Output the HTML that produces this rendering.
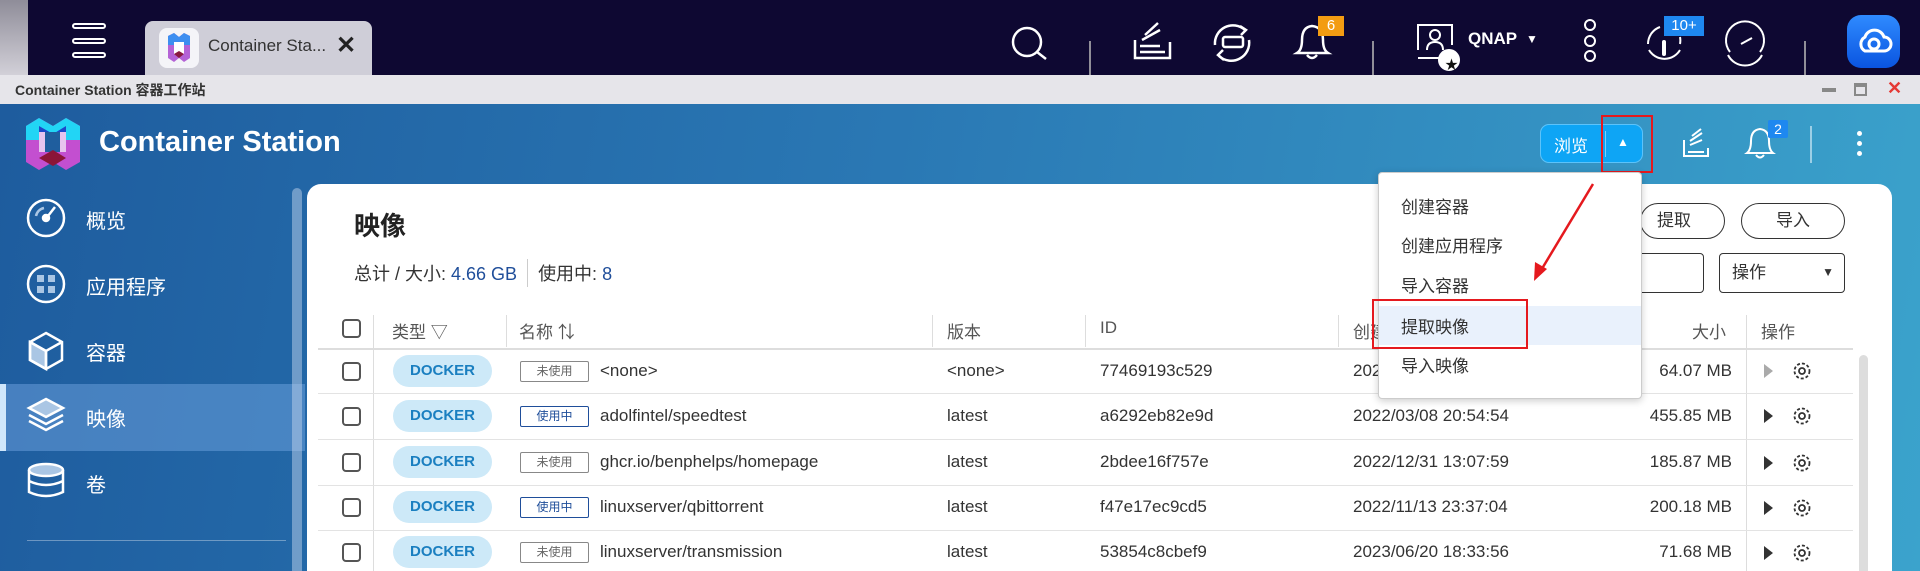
<!DOCTYPE html>
<html><head><meta charset="utf-8"><style>
*{box-sizing:border-box;margin:0;padding:0}
html,body{width:1920px;height:571px;overflow:hidden}
body{position:relative;font-family:"Liberation Sans","Noto Sans CJK SC",sans-serif;background:#fff}
.a{position:absolute}
.top{left:0;top:0;width:1920px;height:75px;background:#0e0832}
.tb{left:0;top:75px;width:1920px;height:29px;background:#e6e5ea}
.main{left:0;top:104px;width:1920px;height:467px;background:linear-gradient(100deg,#1e5c9e 0%,#2a78b4 45%,#3ba3cc 100%)}
.card{left:307px;top:184px;width:1585px;height:387px;background:#fff;border-radius:14px 14px 0 0}
.t{color:#333;font-size:17px;white-space:nowrap}
.side{color:#fff;font-size:20px}
.pill{width:99px;height:32px;border-radius:16px;background:#cde9f8;color:#1a7fc0;font-size:15px;font-weight:bold;text-align:center;line-height:32px}
.tag{width:69px;height:21px;border:1px solid #888;font-size:12px;color:#666;text-align:center;line-height:19px;border-radius:2px}
.tag.u{border-color:#1f4e9a;color:#1f4e9a}
.cb{width:19px;height:19px;border:2px solid #555;border-radius:4px}
.hl{height:1px;background:#e3e3e3}
.vs{width:1px;background:#ddd}
.mi{color:#333;font-size:17px;left:1401px}
</style></head><body>
<div class="a top"></div>
<div class="a" style="left:0;top:0;width:28px;height:75px;background:linear-gradient(#8f8d99,#d2d0d8)"></div>
<div class="a" style="left:72px;top:23px;width:34px;height:6px;border:2px solid #fff;border-radius:4px"></div>
<div class="a" style="left:72px;top:38px;width:34px;height:6px;border:2px solid #fff;border-radius:4px"></div>
<div class="a" style="left:72px;top:52px;width:34px;height:6px;border:2px solid #fff;border-radius:4px"></div>
<div class="a" style="left:145px;top:21px;width:227px;height:54px;background:#cfced8;border-radius:8px 8px 0 0"></div>
<div class="a" style="left:159px;top:28px;width:40px;height:40px;background:#f4f4f8;border-radius:8px"></div>
<svg class="a" style="left:164px;top:33px" width="30" height="30" viewBox="0 0 30 30"><path d="M4 3 L10 0 L15 4 L20 0 L26 3 L26 25 L20 29 L15 25 L10 29 L4 25Z" fill="#b462d6"/><path d="M4 3 L10 0 L15 4 L20 0 L26 3 L26 12 L4 12Z" fill="#3d8ef0"/><rect x="10" y="9" width="10" height="12" fill="#fff"/><path d="M10 21 L15 18 L20 21 L15 25Z" fill="#8a1a40"/></svg>
<div class="a" style="left:208px;top:36px;color:#333;font-size:17px">Container Sta...</div>
<div class="a" style="left:336px;top:31px;color:#222;font-size:24px;font-weight:bold">✕</div>
<svg class="a" style="left:1005px;top:20px" width="400" height="55" viewBox="1005 20 400 55" fill="none" stroke="#fff" stroke-width="2.5">
<circle cx="1027" cy="42" r="14"/><path d="M1037 52 L1046 59"/>
<path d="M1090 41 V75" stroke="#bbb" stroke-width="1.5"/>
<path d="M1135 40 V58 H1170 V42 M1140 52 H1165 M1140 46 H1160 M1142 40 L1160 30 M1145 35 L1158 23"/>
<path d="M1215 45 A18 18 0 0 1 1245 30 M1249 40 A18 18 0 0 1 1219 56"/><path d="M1240 26 L1246 30 L1241 35 M1223 50 L1218 55 L1224 60"/><rect x="1223" y="37" width="20" height="10" rx="2"/>
<path d="M1297 53 Q1302 50 1302 40 Q1302 27 1312 26 Q1323 27 1323 40 Q1323 50 1328 53 Z M1307 55 Q1312 61 1317 55"/>
<path d="M1373 41 V75" stroke="#bbb" stroke-width="1.5"/>
</svg>
<div class="a" style="left:1318px;top:16px;width:26px;height:20px;background:#f39c12;color:#fff;font-size:15px;text-align:center;line-height:20px">6</div>
<svg class="a" style="left:1410px;top:18px" width="510" height="57" viewBox="1410 18 510 57" fill="none" stroke="#fff" stroke-width="2">
<path d="M1418 50 V25 H1452 V45"/><circle cx="1435" cy="35" r="5"/><path d="M1427 50 Q1427 42 1435 42 Q1443 42 1443 50"/><path d="M1418 58 H1440"/>
<circle cx="1449" cy="60" r="10" fill="#fff"/>
<circle cx="1590" cy="25" r="5"/><circle cx="1590" cy="41" r="5"/><circle cx="1590" cy="56" r="5"/>
<path d="M1648 44 A18 18 0 0 1 1660 27 M1680 44 A18 18 0 0 0 1680 37 M1649 50 A18 18 0 0 0 1680 50"/><path d="M1664 42 V54" stroke-width="4" stroke-linecap="round"/>
<path d="M1730 52 A19 19 0 1 1 1760 52 M1728 55 A19 19 0 0 0 1762 55"/><path d="M1741 44 L1752 38"/>
<path d="M1805 41 V75" stroke="#bbb" stroke-width="1.5"/>
</svg>
<div class="a" style="left:1445px;top:54px;color:#111;font-size:13px">★</div>
<div class="a" style="left:1468px;top:29px;color:#fff;font-size:17px;font-weight:bold">QNAP</div>
<div class="a" style="left:1526px;top:32px;color:#fff;font-size:12px">▼</div>
<div class="a" style="left:1664px;top:16px;width:40px;height:20px;background:#1e88f0;color:#fff;font-size:15px;text-align:center;line-height:20px">10+</div>
<div class="a" style="left:1847px;top:15px;width:53px;height:53px;background:linear-gradient(#2f8bff,#0a54e0);border-radius:14px"></div>
<svg class="a" style="left:1855px;top:25px" width="38" height="34" viewBox="0 0 38 34" fill="none" stroke="#fff" stroke-width="3"><path d="M10 26 A8 8 0 0 1 10 12 A10 10 0 0 1 29 12 A7 7 0 0 1 29 26 Z"/><circle cx="19" cy="19" r="5"/></svg>
<div class="a tb"></div>
<div class="a" style="left:15px;top:80px;color:#333;font-size:14px;font-weight:bold">Container Station 容器工作站</div>
<div class="a" style="left:1822px;top:88px;width:14px;height:4px;background:#888"></div>
<div class="a" style="left:1854px;top:83px;width:13px;height:13px;border:2px solid #888;border-top-width:4px"></div>
<div class="a" style="left:1887px;top:78px;color:#e53935;font-size:18px;font-weight:bold">✕</div>
<div class="a main"></div>
<svg class="a" style="left:26px;top:118px" width="54" height="52" viewBox="0 0 54 52"><path d="M0 8 L13 0 L27 8 L40 0 L54 8 L54 44 L40 52 L27 44 L13 52 L0 44Z" fill="#c34fd0"/><path d="M0 8 L13 0 L27 8 L40 0 L54 8 L54 22 L0 22Z" fill="#22d5f5"/><path d="M13 8 L27 16 L40 8 L40 14 L13 14Z" fill="#1d49c9"/><rect x="13" y="14" width="27" height="20" fill="#e7c4ee"/><rect x="19" y="14" width="15" height="20" fill="#1f5e9e"/><path d="M13 40 L27 32 L40 40 L27 48Z" fill="#8b1538"/></svg>
<div class="a" style="left:99px;top:126px;color:#fff;font-size:29px;font-weight:bold">Container Station</div>
<div class="a" style="left:1540px;top:124px;width:103px;height:39px;background:#0ea5f5;border:1px solid #5cc3fa;border-radius:9px"></div>
<div class="a" style="left:1554px;top:132px;color:#fff;font-size:17px">浏览</div>
<div class="a" style="left:1605px;top:131px;width:1px;height:26px;background:#7fd0fb"></div>
<div class="a" style="left:1617px;top:135px;color:#fff;font-size:12px">▲</div>
<div class="a" style="left:1601px;top:115px;width:52px;height:58px;border:2.5px solid #e5191e"></div>
<svg class="a" style="left:1680px;top:125px" width="200" height="40" viewBox="1680 125 200 40" fill="none" stroke="#fff" stroke-width="2">
<path d="M1684 140 V156 H1708 V148 M1688 152 H1704 M1690 145 L1702 140 M1690 141 L1702 133 M1692 136 L1701 129"/>
<path d="M1747 153 Q1751 150 1751 141 Q1751 130 1760 129 Q1769 130 1769 141 Q1769 150 1773 153 Z M1756 155 Q1760 160 1764 155"/>
<path d="M1811 126 V163" stroke="#9ccfe6"/>
</svg>
<div class="a" style="left:1768px;top:120px;width:20px;height:18px;background:#1e88f0;color:#fff;font-size:14px;text-align:center;line-height:18px;border-radius:2px">2</div>
<div class="a" style="left:1857px;top:131px;width:5px;height:5px;border-radius:50%;background:#fff"></div>
<div class="a" style="left:1857px;top:141px;width:5px;height:5px;border-radius:50%;background:#fff"></div>
<div class="a" style="left:1857px;top:151px;width:5px;height:5px;border-radius:50%;background:#fff"></div>
<div class="a" style="left:0;top:384px;width:305px;height:67px;background:rgba(120,170,230,.45)"></div>
<div class="a" style="left:0;top:384px;width:6px;height:67px;background:#cfe6fb"></div>
<div class="a" style="left:292px;top:188px;width:10px;height:383px;border-radius:5px 5px 0 0;background:rgba(190,210,235,.5)"></div>
<svg class="a" style="left:25px;top:196px" width="45" height="310" viewBox="25 196 45 310" fill="none" stroke="#fff" stroke-width="2.5">
<circle cx="46" cy="218" r="18"/><circle cx="46" cy="218" r="3" fill="#fff"/><path d="M48 216 L55 207"/><path d="M36 216 A10 10 0 0 1 44 208" stroke="#aac6e4"/>
<circle cx="46" cy="284" r="18"/><rect x="37" y="275" width="7" height="7" fill="#aac6e4" stroke="none"/><rect x="48" y="275" width="7" height="7" fill="#aac6e4" stroke="none"/><rect x="37" y="286" width="7" height="7" fill="#aac6e4" stroke="none"/><rect x="48" y="286" width="7" height="7" fill="#aac6e4" stroke="none"/>
<path d="M30 342 L46 351 V369 L30 360Z" fill="#aac6e4"/><path d="M46 333 L62 342 L62 360 L46 369 L30 360 L30 342 Z M30 342 L46 351 L62 342 M46 351 V369"/>
<path d="M46 399 L63 408 L46 417 L29 408 Z" fill="#aac6e4"/><path d="M29 415 L46 424 L63 415 M29 421 L46 430 L63 421"/>
<ellipse cx="46" cy="470" rx="17" ry="6" fill="#aac6e4"/><path d="M29 470 V492 Q46 500 63 492 V470 M29 481 Q46 489 63 481"/>
</svg>
<div class="a side" style="left:86px;top:205px">概览</div>
<div class="a side" style="left:86px;top:271px">应用程序</div>
<div class="a side" style="left:86px;top:337px">容器</div>
<div class="a side" style="left:86px;top:403px">映像</div>
<div class="a side" style="left:86px;top:469px">卷</div>
<div class="a" style="left:27px;top:540px;width:259px;height:1px;background:rgba(255,255,255,.35)"></div>
<div class="a card"></div>
<div class="a" style="left:354px;top:206px;color:#222;font-size:26px;font-weight:bold">映像</div>
<div class="a" style="left:354px;top:259px;color:#333;font-size:18px;display:flex;align-items:center;white-space:nowrap">
<span>总计 / 大小: <span style="color:#1f4e9a">4.66 GB</span></span>
<span style="display:inline-block;width:1px;height:28px;background:#ccc;margin:0 10px"></span>
<span>使用中: <span style="color:#1f4e9a">8</span></span></div>
<div class="a" style="left:1640px;top:203px;width:85px;height:36px;border:1.5px solid #333;border-radius:18px;color:#333;font-size:17px;line-height:33px;padding-left:16px">提取</div>
<div class="a" style="left:1741px;top:203px;width:104px;height:36px;border:1.5px solid #333;border-radius:18px;color:#333;font-size:17px;line-height:33px;text-align:center">导入</div>
<div class="a" style="left:1600px;top:253px;width:104px;height:40px;border:1.5px solid #333;border-radius:4px"></div>
<div class="a" style="left:1719px;top:253px;width:126px;height:40px;border:1.5px solid #333;border-radius:4px;color:#333;font-size:17px;line-height:37px;padding-left:12px">操作<span style="position:absolute;right:10px;font-size:12px">▼</span></div>
<div class="a cb" style="left:342px;top:319px"></div>
<div class="a vs" style="left:373px;top:315px;height:256px"></div>
<div class="a vs" style="left:506px;top:315px;height:32px"></div>
<div class="a vs" style="left:932px;top:315px;height:32px"></div>
<div class="a vs" style="left:1085px;top:315px;height:32px"></div>
<div class="a vs" style="left:1338px;top:315px;height:32px"></div>
<div class="a vs" style="left:1746px;top:315px;height:256px"></div>
<div class="a t" style="left:392px;top:318px;color:#555">类型 ▽</div>
<div class="a t" style="left:519px;top:318px;color:#555">名称 ⇅</div>
<div class="a t" style="left:947px;top:318px;color:#555">版本</div>
<div class="a t" style="left:1100px;top:318px;color:#555">ID</div>
<div class="a t" style="left:1353px;top:318px;color:#555">创建</div>
<div class="a t" style="left:1692px;top:318px;color:#555">大小</div>
<div class="a t" style="left:1761px;top:318px;color:#555">操作</div>
<div class="a" style="left:318px;top:348px;width:1535px;height:2px;background:#ddd"></div>
<div class="a" style="left:1859px;top:355px;width:9px;height:216px;border-radius:5px 5px 0 0;background:#ddd"></div>

<div class="a cb" style="left:342px;top:362px"></div><div class="a pill" style="left:393px;top:355px">DOCKER</div><div class="a tag" style="left:520px;top:361px">未使用</div>
<div class="a t" style="left:600px;top:361px">&lt;none&gt;</div><div class="a t" style="left:947px;top:361px">&lt;none&gt;</div><div class="a t" style="left:1100px;top:361px">77469193c529</div><div class="a t" style="left:1353px;top:361px">2023/01/15 10:22:11</div><div class="a t" style="left:1632px;top:361px;width:100px;text-align:right">64.07 MB</div>
<div class="a hl" style="left:318px;top:393px;width:1535px"></div>

<div class="a cb" style="left:342px;top:407px"></div><div class="a pill" style="left:393px;top:400px">DOCKER</div><div class="a tag u" style="left:520px;top:406px">使用中</div>
<div class="a t" style="left:600px;top:406px">adolfintel/speedtest</div><div class="a t" style="left:947px;top:406px">latest</div><div class="a t" style="left:1100px;top:406px">a6292eb82e9d</div><div class="a t" style="left:1353px;top:406px">2022/03/08 20:54:54</div><div class="a t" style="left:1632px;top:406px;width:100px;text-align:right">455.85 MB</div>
<div class="a hl" style="left:318px;top:439px;width:1535px"></div>

<div class="a cb" style="left:342px;top:453px"></div><div class="a pill" style="left:393px;top:446px">DOCKER</div><div class="a tag" style="left:520px;top:452px">未使用</div>
<div class="a t" style="left:600px;top:452px">ghcr.io/benphelps/homepage</div><div class="a t" style="left:947px;top:452px">latest</div><div class="a t" style="left:1100px;top:452px">2bdee16f757e</div><div class="a t" style="left:1353px;top:452px">2022/12/31 13:07:59</div><div class="a t" style="left:1632px;top:452px;width:100px;text-align:right">185.87 MB</div>
<div class="a hl" style="left:318px;top:485px;width:1535px"></div>

<div class="a cb" style="left:342px;top:498px"></div><div class="a pill" style="left:393px;top:491px">DOCKER</div><div class="a tag u" style="left:520px;top:497px">使用中</div>
<div class="a t" style="left:600px;top:497px">linuxserver/qbittorrent</div><div class="a t" style="left:947px;top:497px">latest</div><div class="a t" style="left:1100px;top:497px">f47e17ec9cd5</div><div class="a t" style="left:1353px;top:497px">2022/11/13 23:37:04</div><div class="a t" style="left:1632px;top:497px;width:100px;text-align:right">200.18 MB</div>
<div class="a hl" style="left:318px;top:530px;width:1535px"></div>

<div class="a cb" style="left:342px;top:543px"></div><div class="a pill" style="left:393px;top:536px">DOCKER</div><div class="a tag" style="left:520px;top:542px">未使用</div>
<div class="a t" style="left:600px;top:542px">linuxserver/transmission</div><div class="a t" style="left:947px;top:542px">latest</div><div class="a t" style="left:1100px;top:542px">53854c8cbef9</div><div class="a t" style="left:1353px;top:542px">2023/06/20 18:33:56</div><div class="a t" style="left:1632px;top:542px;width:100px;text-align:right">71.68 MB</div>

<svg class="a" style="left:1760px;top:355px" width="60" height="216" viewBox="1760 355 60 216" fill="none" stroke="#333" stroke-width="1.8">
<path d="M1764 364 L1773 371 L1764 378Z" fill="#aaa" stroke="none"/>
<path d="M1764 409 L1773 416 L1764 423Z" fill="#333" stroke="none"/>
<path d="M1764 456 L1773 463 L1764 470Z" fill="#333" stroke="none"/>
<path d="M1764 501 L1773 508 L1764 515Z" fill="#333" stroke="none"/>
<path d="M1764 546 L1773 553 L1764 560Z" fill="#333" stroke="none"/>
<circle cx="1802" cy="371" r="3"/><circle cx="1802" cy="371" r="7.5" stroke-dasharray="3 2"/>
<circle cx="1802" cy="416" r="3"/><circle cx="1802" cy="416" r="7.5" stroke-dasharray="3 2"/>
<circle cx="1802" cy="463" r="3"/><circle cx="1802" cy="463" r="7.5" stroke-dasharray="3 2"/>
<circle cx="1802" cy="508" r="3"/><circle cx="1802" cy="508" r="7.5" stroke-dasharray="3 2"/>
<circle cx="1802" cy="553" r="3"/><circle cx="1802" cy="553" r="7.5" stroke-dasharray="3 2"/>
</svg>
<div class="a" style="left:1378px;top:172px;width:264px;height:227px;background:#fff;border:1px solid #ccc;border-radius:4px;box-shadow:0 2px 8px rgba(0,0,0,.2)"></div>
<div class="a" style="left:1379px;top:306px;width:262px;height:39px;background:#e9f1fc"></div>
<div class="a mi" style="top:193px">创建容器</div>
<div class="a mi" style="top:232px">创建应用程序</div>
<div class="a mi" style="top:272px">导入容器</div>
<div class="a mi" style="top:313px">提取映像</div>
<div class="a mi" style="top:352px">导入映像</div>
<div class="a" style="left:1372px;top:299px;width:156px;height:50px;border:2.5px solid #e5191e"></div>
<svg class="a" style="left:1520px;top:180px" width="80" height="106" viewBox="1520 180 80 106"><path d="M1593 184 L1540 272" stroke="#e5191e" stroke-width="2.5"/><path d="M1534 281 L1535 262 L1547 269Z" fill="#e5191e"/></svg>
</body></html>
